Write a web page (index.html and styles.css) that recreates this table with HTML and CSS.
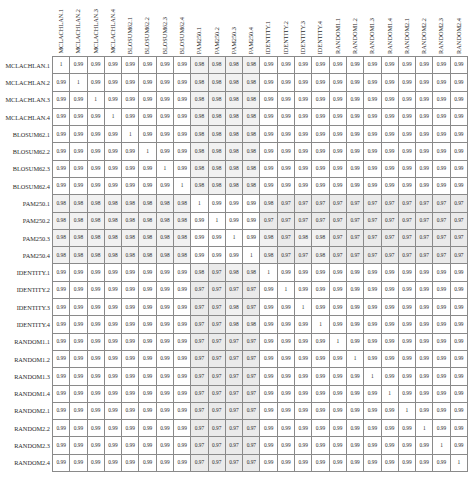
FILE: index.html
```html
<!DOCTYPE html>
<html>
<head>
<meta charset="utf-8">
<link rel="stylesheet" href="styles.css">
</head>
<body>
<div class="wrap">
  <div class="corner"></div>
  <div class="cols">
    <div class="col"><span>MCLACHLAN.1</span></div>
    <div class="col"><span>MCLACHLAN.2</span></div>
    <div class="col"><span>MCLACHLAN.3</span></div>
    <div class="col"><span>MCLACHLAN.4</span></div>
    <div class="col"><span>BLOSUM62.1</span></div>
    <div class="col"><span>BLOSUM62.2</span></div>
    <div class="col"><span>BLOSUM62.3</span></div>
    <div class="col"><span>BLOSUM62.4</span></div>
    <div class="col"><span>PAM250.1</span></div>
    <div class="col"><span>PAM250.2</span></div>
    <div class="col"><span>PAM250.3</span></div>
    <div class="col"><span>PAM250.4</span></div>
    <div class="col"><span>IDENTITY.1</span></div>
    <div class="col"><span>IDENTITY.2</span></div>
    <div class="col"><span>IDENTITY.3</span></div>
    <div class="col"><span>IDENTITY.4</span></div>
    <div class="col"><span>RANDOM1.1</span></div>
    <div class="col"><span>RANDOM1.2</span></div>
    <div class="col"><span>RANDOM1.3</span></div>
    <div class="col"><span>RANDOM1.4</span></div>
    <div class="col"><span>RANDOM2.1</span></div>
    <div class="col"><span>RANDOM2.2</span></div>
    <div class="col"><span>RANDOM2.3</span></div>
    <div class="col"><span>RANDOM2.4</span></div>
  </div>
  <div class="rows">
    <span>MCLACHLAN.1</span>
    <span>MCLACHLAN.2</span>
    <span>MCLACHLAN.3</span>
    <span>MCLACHLAN.4</span>
    <span>BLOSUM62.1</span>
    <span>BLOSUM62.2</span>
    <span>BLOSUM62.3</span>
    <span>BLOSUM62.4</span>
    <span>PAM250.1</span>
    <span>PAM250.2</span>
    <span>PAM250.3</span>
    <span>PAM250.4</span>
    <span>IDENTITY.1</span>
    <span>IDENTITY.2</span>
    <span>IDENTITY.3</span>
    <span>IDENTITY.4</span>
    <span>RANDOM1.1</span>
    <span>RANDOM1.2</span>
    <span>RANDOM1.3</span>
    <span>RANDOM1.4</span>
    <span>RANDOM2.1</span>
    <span>RANDOM2.2</span>
    <span>RANDOM2.3</span>
    <span>RANDOM2.4</span>
  </div>
  <div class="matrix">
<span>1</span><span>0.99</span><span>0.99</span><span>0.99</span><span>0.99</span><span>0.99</span><span>0.99</span><span>0.99</span><span class="b">0.98</span><span class="b">0.98</span><span class="b">0.98</span><span class="b">0.98</span><span>0.99</span><span>0.99</span><span>0.99</span><span>0.99</span><span>0.99</span><span>0.99</span><span>0.99</span><span>0.99</span><span>0.99</span><span>0.99</span><span>0.99</span><span>0.99</span>
<span>0.99</span><span>1</span><span>0.99</span><span>0.99</span><span>0.99</span><span>0.99</span><span>0.99</span><span>0.99</span><span class="b">0.98</span><span class="b">0.98</span><span class="b">0.98</span><span class="b">0.98</span><span>0.99</span><span>0.99</span><span>0.99</span><span>0.99</span><span>0.99</span><span>0.99</span><span>0.99</span><span>0.99</span><span>0.99</span><span>0.99</span><span>0.99</span><span>0.99</span>
<span>0.99</span><span>0.99</span><span>1</span><span>0.99</span><span>0.99</span><span>0.99</span><span>0.99</span><span>0.99</span><span class="b">0.98</span><span class="b">0.98</span><span class="b">0.98</span><span class="b">0.98</span><span>0.99</span><span>0.99</span><span>0.99</span><span>0.99</span><span>0.99</span><span>0.99</span><span>0.99</span><span>0.99</span><span>0.99</span><span>0.99</span><span>0.99</span><span>0.99</span>
<span>0.99</span><span>0.99</span><span>0.99</span><span>1</span><span>0.99</span><span>0.99</span><span>0.99</span><span>0.99</span><span class="b">0.98</span><span class="b">0.98</span><span class="b">0.98</span><span class="b">0.98</span><span>0.99</span><span>0.99</span><span>0.99</span><span>0.99</span><span>0.99</span><span>0.99</span><span>0.99</span><span>0.99</span><span>0.99</span><span>0.99</span><span>0.99</span><span>0.99</span>
<span>0.99</span><span>0.99</span><span>0.99</span><span>0.99</span><span>1</span><span>0.99</span><span>0.99</span><span>0.99</span><span class="b">0.98</span><span class="b">0.98</span><span class="b">0.98</span><span class="b">0.98</span><span>0.99</span><span>0.99</span><span>0.99</span><span>0.99</span><span>0.99</span><span>0.99</span><span>0.99</span><span>0.99</span><span>0.99</span><span>0.99</span><span>0.99</span><span>0.99</span>
<span>0.99</span><span>0.99</span><span>0.99</span><span>0.99</span><span>0.99</span><span>1</span><span>0.99</span><span>0.99</span><span class="b">0.98</span><span class="b">0.98</span><span class="b">0.98</span><span class="b">0.98</span><span>0.99</span><span>0.99</span><span>0.99</span><span>0.99</span><span>0.99</span><span>0.99</span><span>0.99</span><span>0.99</span><span>0.99</span><span>0.99</span><span>0.99</span><span>0.99</span>
<span>0.99</span><span>0.99</span><span>0.99</span><span>0.99</span><span>0.99</span><span>0.99</span><span>1</span><span>0.99</span><span class="b">0.98</span><span class="b">0.98</span><span class="b">0.98</span><span class="b">0.98</span><span>0.99</span><span>0.99</span><span>0.99</span><span>0.99</span><span>0.99</span><span>0.99</span><span>0.99</span><span>0.99</span><span>0.99</span><span>0.99</span><span>0.99</span><span>0.99</span>
<span>0.99</span><span>0.99</span><span>0.99</span><span>0.99</span><span>0.99</span><span>0.99</span><span>0.99</span><span>1</span><span class="b">0.98</span><span class="b">0.98</span><span class="b">0.98</span><span class="b">0.98</span><span>0.99</span><span>0.99</span><span>0.99</span><span>0.99</span><span>0.99</span><span>0.99</span><span>0.99</span><span>0.99</span><span>0.99</span><span>0.99</span><span>0.99</span><span>0.99</span>
<span class="b">0.98</span><span class="b">0.98</span><span class="b">0.98</span><span class="b">0.98</span><span class="b">0.98</span><span class="b">0.98</span><span class="b">0.98</span><span class="b">0.98</span><span>1</span><span>0.99</span><span>0.99</span><span>0.99</span><span class="b">0.98</span><span class="c">0.97</span><span class="c">0.97</span><span class="c">0.97</span><span class="c">0.97</span><span class="c">0.97</span><span class="c">0.97</span><span class="c">0.97</span><span class="c">0.97</span><span class="c">0.97</span><span class="c">0.97</span><span class="c">0.97</span>
<span class="b">0.98</span><span class="b">0.98</span><span class="b">0.98</span><span class="b">0.98</span><span class="b">0.98</span><span class="b">0.98</span><span class="b">0.98</span><span class="b">0.98</span><span>0.99</span><span>1</span><span>0.99</span><span>0.99</span><span class="c">0.97</span><span class="c">0.97</span><span class="c">0.97</span><span class="c">0.97</span><span class="c">0.97</span><span class="c">0.97</span><span class="c">0.97</span><span class="c">0.97</span><span class="c">0.97</span><span class="c">0.97</span><span class="c">0.97</span><span class="c">0.97</span>
<span class="b">0.98</span><span class="b">0.98</span><span class="b">0.98</span><span class="b">0.98</span><span class="b">0.98</span><span class="b">0.98</span><span class="b">0.98</span><span class="b">0.98</span><span>0.99</span><span>0.99</span><span>1</span><span>0.99</span><span class="b">0.98</span><span class="c">0.97</span><span class="b">0.98</span><span class="b">0.98</span><span class="c">0.97</span><span class="c">0.97</span><span class="c">0.97</span><span class="c">0.97</span><span class="c">0.97</span><span class="c">0.97</span><span class="c">0.97</span><span class="c">0.97</span>
<span class="b">0.98</span><span class="b">0.98</span><span class="b">0.98</span><span class="b">0.98</span><span class="b">0.98</span><span class="b">0.98</span><span class="b">0.98</span><span class="b">0.98</span><span>0.99</span><span>0.99</span><span>0.99</span><span>1</span><span class="b">0.98</span><span class="c">0.97</span><span class="c">0.97</span><span class="b">0.98</span><span class="c">0.97</span><span class="c">0.97</span><span class="c">0.97</span><span class="c">0.97</span><span class="c">0.97</span><span class="c">0.97</span><span class="c">0.97</span><span class="c">0.97</span>
<span>0.99</span><span>0.99</span><span>0.99</span><span>0.99</span><span>0.99</span><span>0.99</span><span>0.99</span><span>0.99</span><span class="b">0.98</span><span class="c">0.97</span><span class="b">0.98</span><span class="b">0.98</span><span>1</span><span>0.99</span><span>0.99</span><span>0.99</span><span>0.99</span><span>0.99</span><span>0.99</span><span>0.99</span><span>0.99</span><span>0.99</span><span>0.99</span><span>0.99</span>
<span>0.99</span><span>0.99</span><span>0.99</span><span>0.99</span><span>0.99</span><span>0.99</span><span>0.99</span><span>0.99</span><span class="c">0.97</span><span class="c">0.97</span><span class="c">0.97</span><span class="c">0.97</span><span>0.99</span><span>1</span><span>0.99</span><span>0.99</span><span>0.99</span><span>0.99</span><span>0.99</span><span>0.99</span><span>0.99</span><span>0.99</span><span>0.99</span><span>0.99</span>
<span>0.99</span><span>0.99</span><span>0.99</span><span>0.99</span><span>0.99</span><span>0.99</span><span>0.99</span><span>0.99</span><span class="c">0.97</span><span class="c">0.97</span><span class="b">0.98</span><span class="c">0.97</span><span>0.99</span><span>0.99</span><span>1</span><span>0.99</span><span>0.99</span><span>0.99</span><span>0.99</span><span>0.99</span><span>0.99</span><span>0.99</span><span>0.99</span><span>0.99</span>
<span>0.99</span><span>0.99</span><span>0.99</span><span>0.99</span><span>0.99</span><span>0.99</span><span>0.99</span><span>0.99</span><span class="c">0.97</span><span class="c">0.97</span><span class="b">0.98</span><span class="b">0.98</span><span>0.99</span><span>0.99</span><span>0.99</span><span>1</span><span>0.99</span><span>0.99</span><span>0.99</span><span>0.99</span><span>0.99</span><span>0.99</span><span>0.99</span><span>0.99</span>
<span>0.99</span><span>0.99</span><span>0.99</span><span>0.99</span><span>0.99</span><span>0.99</span><span>0.99</span><span>0.99</span><span class="c">0.97</span><span class="c">0.97</span><span class="c">0.97</span><span class="c">0.97</span><span>0.99</span><span>0.99</span><span>0.99</span><span>0.99</span><span>1</span><span>0.99</span><span>0.99</span><span>0.99</span><span>0.99</span><span>0.99</span><span>0.99</span><span>0.99</span>
<span>0.99</span><span>0.99</span><span>0.99</span><span>0.99</span><span>0.99</span><span>0.99</span><span>0.99</span><span>0.99</span><span class="c">0.97</span><span class="c">0.97</span><span class="c">0.97</span><span class="c">0.97</span><span>0.99</span><span>0.99</span><span>0.99</span><span>0.99</span><span>0.99</span><span>1</span><span>0.99</span><span>0.99</span><span>0.99</span><span>0.99</span><span>0.99</span><span>0.99</span>
<span>0.99</span><span>0.99</span><span>0.99</span><span>0.99</span><span>0.99</span><span>0.99</span><span>0.99</span><span>0.99</span><span class="c">0.97</span><span class="c">0.97</span><span class="c">0.97</span><span class="c">0.97</span><span>0.99</span><span>0.99</span><span>0.99</span><span>0.99</span><span>0.99</span><span>0.99</span><span>1</span><span>0.99</span><span>0.99</span><span>0.99</span><span>0.99</span><span>0.99</span>
<span>0.99</span><span>0.99</span><span>0.99</span><span>0.99</span><span>0.99</span><span>0.99</span><span>0.99</span><span>0.99</span><span class="c">0.97</span><span class="c">0.97</span><span class="c">0.97</span><span class="c">0.97</span><span>0.99</span><span>0.99</span><span>0.99</span><span>0.99</span><span>0.99</span><span>0.99</span><span>0.99</span><span>1</span><span>0.99</span><span>0.99</span><span>0.99</span><span>0.99</span>
<span>0.99</span><span>0.99</span><span>0.99</span><span>0.99</span><span>0.99</span><span>0.99</span><span>0.99</span><span>0.99</span><span class="c">0.97</span><span class="c">0.97</span><span class="c">0.97</span><span class="c">0.97</span><span>0.99</span><span>0.99</span><span>0.99</span><span>0.99</span><span>0.99</span><span>0.99</span><span>0.99</span><span>0.99</span><span>1</span><span>0.99</span><span>0.99</span><span>0.99</span>
<span>0.99</span><span>0.99</span><span>0.99</span><span>0.99</span><span>0.99</span><span>0.99</span><span>0.99</span><span>0.99</span><span class="c">0.97</span><span class="c">0.97</span><span class="c">0.97</span><span class="c">0.97</span><span>0.99</span><span>0.99</span><span>0.99</span><span>0.99</span><span>0.99</span><span>0.99</span><span>0.99</span><span>0.99</span><span>0.99</span><span>1</span><span>0.99</span><span>0.99</span>
<span>0.99</span><span>0.99</span><span>0.99</span><span>0.99</span><span>0.99</span><span>0.99</span><span>0.99</span><span>0.99</span><span class="c">0.97</span><span class="c">0.97</span><span class="c">0.97</span><span class="c">0.97</span><span>0.99</span><span>0.99</span><span>0.99</span><span>0.99</span><span>0.99</span><span>0.99</span><span>0.99</span><span>0.99</span><span>0.99</span><span>0.99</span><span>1</span><span>0.99</span>
<span>0.99</span><span>0.99</span><span>0.99</span><span>0.99</span><span>0.99</span><span>0.99</span><span>0.99</span><span>0.99</span><span class="c">0.97</span><span class="c">0.97</span><span class="c">0.97</span><span class="c">0.97</span><span>0.99</span><span>0.99</span><span>0.99</span><span>0.99</span><span>0.99</span><span>0.99</span><span>0.99</span><span>0.99</span><span>0.99</span><span>0.99</span><span>0.99</span><span>1</span>
  </div>
</div>
</body>
</html>
```
FILE: styles.css
```css
html, body {
  margin: 0;
  padding: 0;
  background: #ffffff;
}
body {
  font-family: "Liberation Serif", "DejaVu Serif", serif;
  color: #2a2a2a;
}
.wrap {
  display: grid;
  grid-template-columns: 52px 416px;
  grid-template-rows: 56px 416px;
}
.cols {
  display: grid;
  grid-template-columns: repeat(24, 1fr);
  column-gap: 1px;
  padding: 0 1px;
}
.col {
  display: flex;
  align-items: flex-end;
  justify-content: center;
  padding-bottom: 2px;
  overflow: visible;
}
.col span {
  writing-mode: vertical-rl;
  transform: rotate(180deg);
  font-size: 6.3px;
  line-height: 1;
  white-space: nowrap;
}
.rows {
  display: grid;
  grid-template-rows: repeat(24, 1fr);
  row-gap: 1px;
  padding: 1px 0;
}
.rows span {
  display: flex;
  align-items: center;
  justify-content: flex-end;
  padding-right: 2px;
  font-size: 6.3px;
  white-space: nowrap;
}
.matrix {
  display: grid;
  grid-template-columns: repeat(24, 1fr);
  grid-template-rows: repeat(24, 1fr);
  gap: 1px;
  padding: 1px;
  background: #8a8a8a;
}
.matrix span {
  background: #ffffff;
  display: flex;
  align-items: center;
  justify-content: center;
  font-size: 5.4px;
  line-height: 1;
}
.matrix .b {
  background: #f1f1f1;
}
.matrix .c {
  background: #eaeaea;
}
```
